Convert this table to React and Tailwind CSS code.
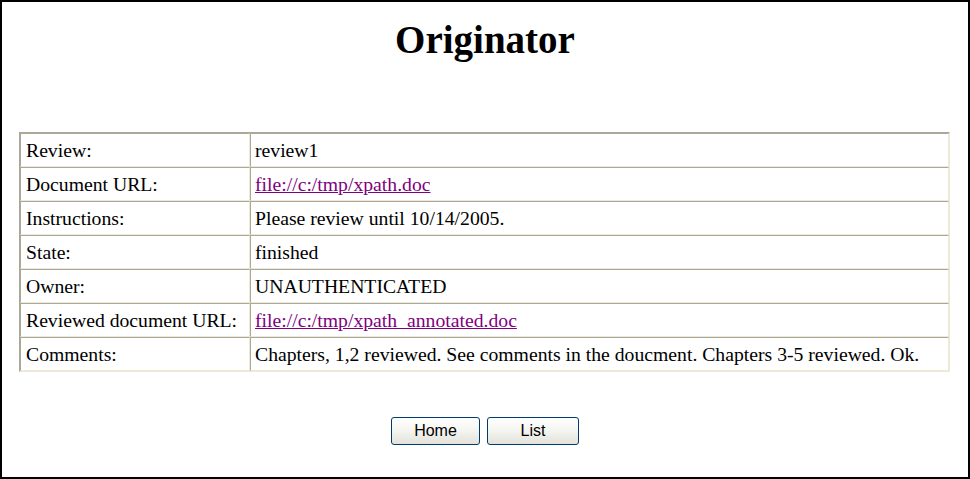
import React from 'react'

const ROWS = [
  { label: 'Review:', value: 'review1' },
  { label: 'Document URL:', value: 'file://c:/tmp/xpath.doc', link: true },
  { label: 'Instructions:', value: 'Please review until 10/14/2005.' },
  { label: 'State:', value: 'finished' },
  { label: 'Owner:', value: 'UNAUTHENTICATED' },
  { label: 'Reviewed document URL:', value: 'file://c:/tmp/xpath_annotated.doc', link: true },
  { label: 'Comments:', value: 'Chapters, 1,2 reviewed. See comments in the doucment. Chapters 3-5 reviewed. Ok.' },
]

function XpButton({ children, width }) {
  return (
    <button
      type="button"
      className={`${width} h-[28px] rounded-[3px] border border-[#003c74] bg-gradient-to-b from-white via-[#f4f4f0] to-[#e3e2da] text-[16px] text-black leading-none`}
      style={{ fontFamily: '"Liberation Sans", Arial, sans-serif' }}
    >
      {children}
    </button>
  )
}

export default function App() {
  return (
    <div
      className="w-[970px] h-[479px] border-2 border-black bg-white text-black"
      style={{ fontFamily: '"Liberation Serif", "Times New Roman", serif' }}
    >
      <h1 className="pt-[15px] text-center text-[39px] font-bold leading-[45px]">Originator</h1>

      <table className="mt-[70px] ml-[17px] w-[931px] border-separate border-spacing-0 border border-t-[#aca899] border-l-[#aca899] border-b-[#ece9d8] border-r-[#ece9d8] text-[19.7px] leading-[22px]">
        <tbody>
          {ROWS.map((row) => (
            <tr key={row.label}>
              <td className="w-[230px] border border-t-[#aca899] border-l-[#aca899] border-b-[#ece9d8] border-r-[#ece9d8] pl-[5px] pr-[4px] py-[5px] whitespace-nowrap">
                {row.label}
              </td>
              <td className="border border-t-[#aca899] border-l-[#aca899] border-b-[#ece9d8] border-r-[#ece9d8] px-[4px] py-[5px] whitespace-nowrap">
                {row.link ? (
                  <a href="#" className="text-[#800080] underline">{row.value}</a>
                ) : (
                  row.value
                )}
              </td>
            </tr>
          ))}
        </tbody>
      </table>

      <div className="mt-[45px] flex justify-center gap-[7px]">
        <XpButton width="w-[89px]">Home</XpButton>
        <XpButton width="w-[92px]">List</XpButton>
      </div>
    </div>
  )
}
